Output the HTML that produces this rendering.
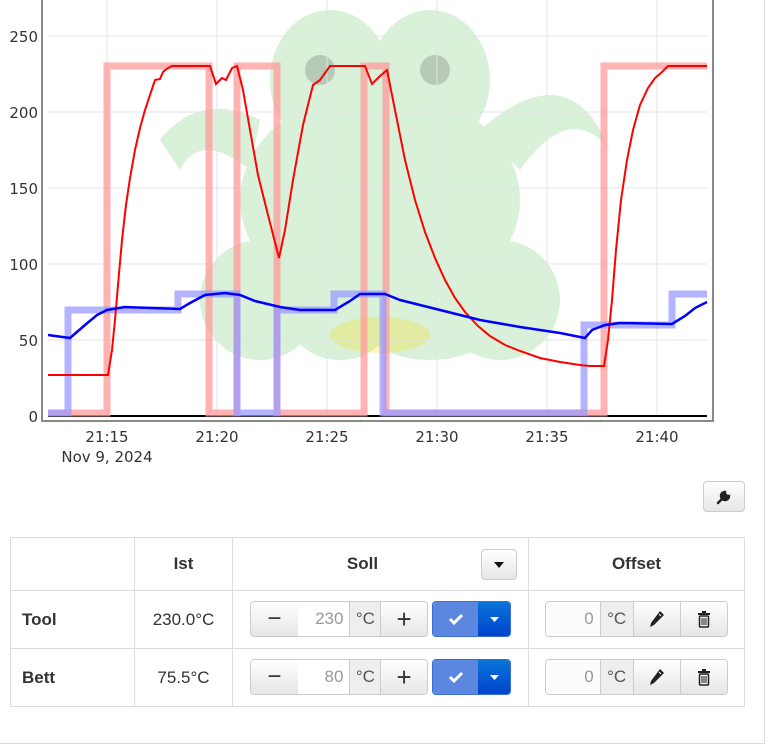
<!DOCTYPE html>
<html><head><meta charset="utf-8"><style>
body{margin:0;width:782px;height:752px;background:#fff;font-family:"Liberation Sans",Arial,sans-serif;position:relative;overflow:hidden}
.abs{position:absolute}
.panelR{left:764px;top:0;width:1px;height:744px;background:#ddd}
.panelB{left:0;top:743px;width:765px;height:1px;background:#ddd}
table{position:absolute;left:10px;top:537px;border-collapse:collapse;width:735px;font-size:17px;color:#333}
td{border:1px solid #ddd;padding:0;text-align:center;position:relative}
.g{position:absolute;height:36px;border:1px solid #ccc;border-radius:4px;box-sizing:border-box;display:flex;overflow:hidden;background:#fff;top:10px}
.g>div{display:flex;align-items:center;justify-content:center;height:100%;box-sizing:border-box}
.bt{background:linear-gradient(#fff,#e6e6e6);color:#333}
.ad{background:#eee;color:#555;border-left:1px solid #ccc;border-right:1px solid #ccc}
.inp{color:#999;justify-content:flex-end!important;padding-right:6px}
</style></head><body>
<div class="abs panelR"></div><div class="abs panelB"></div>
<svg class="abs" style="left:0;top:0" width="782" height="470" font-family="Verdana,DejaVu Sans,sans-serif" font-size="15">
<g opacity="0.18" fill="#2db52d">
<ellipse cx="330" cy="80" rx="60" ry="70"/><ellipse cx="430" cy="80" rx="60" ry="70"/>
<ellipse cx="380" cy="200" rx="140" ry="110"/><path d="M160 140 Q200 90 260 120 L250 170 Q200 130 180 170Z"/>
<path d="M480 130 Q560 60 600 130 L610 150 Q570 100 520 170Z"/>
<ellipse cx="260" cy="300" rx="60" ry="60"/><ellipse cx="500" cy="300" rx="60" ry="60"/>
<ellipse cx="340" cy="320" rx="50" ry="40"/><ellipse cx="430" cy="330" rx="60" ry="30"/>
</g>
<g opacity="0.25"><circle cx="320" cy="70" r="15" fill="#555"/><circle cx="435" cy="70" r="15" fill="#555"/><ellipse cx="380" cy="335" rx="50" ry="18" fill="#fd0"/></g>
<g stroke="#e3e3e3" stroke-width="1">
<line x1="48" y1="36" x2="707" y2="36"/><line x1="48" y1="112" x2="707" y2="112"/><line x1="48" y1="188" x2="707" y2="188"/><line x1="48" y1="264" x2="707" y2="264"/><line x1="48" y1="340" x2="707" y2="340"/>
<line x1="107" y1="0" x2="107" y2="416"/><line x1="217" y1="0" x2="217" y2="416"/><line x1="327" y1="0" x2="327" y2="416"/><line x1="437" y1="0" x2="437" y2="416"/><line x1="547" y1="0" x2="547" y2="416"/><line x1="657" y1="0" x2="657" y2="416"/>
</g>
<polyline fill="none" stroke="#888" stroke-width="2" points="42,0 42,421 713,421 713,0"/>
<line x1="48" y1="416" x2="707" y2="416" stroke="#000" stroke-width="2"/>
<polyline fill="none" stroke="#ff9999" stroke-opacity="0.75" stroke-width="7" points="48,413 107,413 107,66 209,66 209,413 237,413 237,66 277,66 277,413 364,413 364,66 386,66 386,413 604,413 604,66 707,66"/>
<polyline fill="none" stroke="#9999ff" stroke-opacity="0.75" stroke-width="7" points="48,413 68,413 68,310 178,310 178,294 237,294 237,413 277,413 277,310 334,310 334,294 383,294 383,413 584,413 584,325 672,325 672,294 707,294"/>
<polyline fill="none" stroke="#f00" stroke-width="2" points="48,375 108,375 112,350 115,320 118,285 122,240 126,205 130,178 135,150 140,128 145,110 150,95 155,80 160,79 163,72 168,68 172,66 210,66 216,84 222,78 226,80 232,68 237,66 243,90 250,130 258,175 268,215 279,258 285,230 293,180 303,125 313,85 320,80 330,66 365,66 372,84 380,76 387,70 392,95 398,125 405,160 415,200 425,232 435,258 445,280 455,298 465,312 478,326 490,336 505,345 520,351 540,358 560,362 580,365 590,366 604,366 608,340 612,300 616,250 621,200 627,160 633,130 640,105 648,88 655,78 662,72 668,66 707,66"/>
<polyline fill="none" stroke="#00f" stroke-width="2.5" points="48,335 70,338 85,325 97,315 107,310 125,307 180,309 190,303 205,295 225,293 240,295 255,301 280,307 300,310 335,310 350,301 360,294 385,294 400,300 440,310 480,320 520,327 560,333 585,338 592,330 605,325 620,323 672,324 685,316 695,308 707,302"/>
<g fill="#333" text-anchor="end"><text x="38" y="42">250</text><text x="38" y="118">200</text><text x="38" y="194">150</text><text x="38" y="270">100</text><text x="38" y="346">50</text><text x="38" y="422">0</text></g>
<g fill="#333" text-anchor="middle"><text x="107" y="442">21:15</text><text x="217" y="442">21:20</text><text x="327" y="442">21:25</text><text x="437" y="442">21:30</text><text x="547" y="442">21:35</text><text x="657" y="442">21:40</text><text x="107" y="462">Nov 9, 2024</text></g>
</svg>
<div class="abs" style="left:703px;top:481px;width:42px;height:31px;border:1px solid #ccc;border-radius:4px;box-sizing:border-box;background:linear-gradient(#fff,#e6e6e6);display:flex;align-items:center;justify-content:center">
<svg width="16" height="16" viewBox="0 0 16 16"><path d="M2 14 L8 8 M9 3 A4 4 0 1 0 13 7 L11 7 L9 5Z" stroke="#222" stroke-width="2.5" fill="#222" stroke-linecap="round"/></svg></div>
<table>
<tr style="height:53px;font-weight:bold"><td style="width:123px"></td><td style="width:97px">Ist</td><td style="width:295px"><span style="position:relative;left:-18px">Soll</span><div style="position:absolute;left:248px;top:11px;width:36px;height:31px;border:1px solid #ccc;border-radius:4px;box-sizing:border-box;background:linear-gradient(#fff,#e6e6e6);display:flex;align-items:center;justify-content:center"><svg width="10" height="6"><path d="M0 0H10L5 6Z" fill="#111"/></svg></div></td><td>Offset</td></tr>
<tr style="height:58px"><td style="text-align:left;padding-left:11px;font-weight:bold">Tool</td><td>230.0°C</td><td>
<div class="g" style="left:17px;width:178px"><div class="bt" style="width:47px;font-size:24px">−</div><div class="inp" style="width:52px">230</div><div class="ad" style="width:32px">°C</div><div class="bt" style="width:46px;font-size:26px">+</div></div>
<div class="g" style="left:199px;width:79px;border-color:#3a6fd0"><div style="width:46px;background:#5b87e0"><svg width="16" height="12"><path d="M2 6L6 10L14 2" stroke="#fff" stroke-width="3" fill="none"/></svg></div><div style="width:32px;background:linear-gradient(#0a74d8,#0044cc)"><svg width="9" height="5"><path d="M0 0H9L4.5 5Z" fill="#fff"/></svg></div></div></td>
<td><div class="g" style="left:16px;width:183px"><div class="inp" style="width:54px;background:#fcfcfc">0</div><div class="ad" style="width:34px">°C</div><div class="bt" style="width:48px;border-right:1px solid #ccc"><svg width="16" height="18" viewBox="0 0 16 18"><path d="M11 1L15 5L5 15L1 17L2 13Z" fill="#222"/><path d="M10 4L12 6" stroke="#fff" stroke-width="1"/></svg></div><div class="bt" style="width:46px"><svg width="14" height="18" viewBox="0 0 14 18"><path d="M5 1H9V3H13V5H1V3H5Z" fill="#222"/><rect x="2.5" y="6" width="9" height="11" rx="1" fill="none" stroke="#222" stroke-width="1.5"/><path d="M5 8V15M7 8V15M9 8V15" stroke="#222" stroke-width="1"/></svg></div></div></td></tr>
<tr style="height:58px"><td style="text-align:left;padding-left:11px;font-weight:bold">Bett</td><td>75.5°C</td><td>
<div class="g" style="left:17px;width:178px"><div class="bt" style="width:47px;font-size:24px">−</div><div class="inp" style="width:52px">80</div><div class="ad" style="width:32px">°C</div><div class="bt" style="width:46px;font-size:26px">+</div></div>
<div class="g" style="left:199px;width:79px;border-color:#3a6fd0"><div style="width:46px;background:#5b87e0"><svg width="16" height="12"><path d="M2 6L6 10L14 2" stroke="#fff" stroke-width="3" fill="none"/></svg></div><div style="width:32px;background:linear-gradient(#0a74d8,#0044cc)"><svg width="9" height="5"><path d="M0 0H9L4.5 5Z" fill="#fff"/></svg></div></div></td>
<td><div class="g" style="left:16px;width:183px"><div class="inp" style="width:54px;background:#fcfcfc">0</div><div class="ad" style="width:34px">°C</div><div class="bt" style="width:48px;border-right:1px solid #ccc"><svg width="16" height="18" viewBox="0 0 16 18"><path d="M11 1L15 5L5 15L1 17L2 13Z" fill="#222"/><path d="M10 4L12 6" stroke="#fff" stroke-width="1"/></svg></div><div class="bt" style="width:46px"><svg width="14" height="18" viewBox="0 0 14 18"><path d="M5 1H9V3H13V5H1V3H5Z" fill="#222"/><rect x="2.5" y="6" width="9" height="11" rx="1" fill="none" stroke="#222" stroke-width="1.5"/><path d="M5 8V15M7 8V15M9 8V15" stroke="#222" stroke-width="1"/></svg></div></div></td></tr>
</table>
</body></html>
